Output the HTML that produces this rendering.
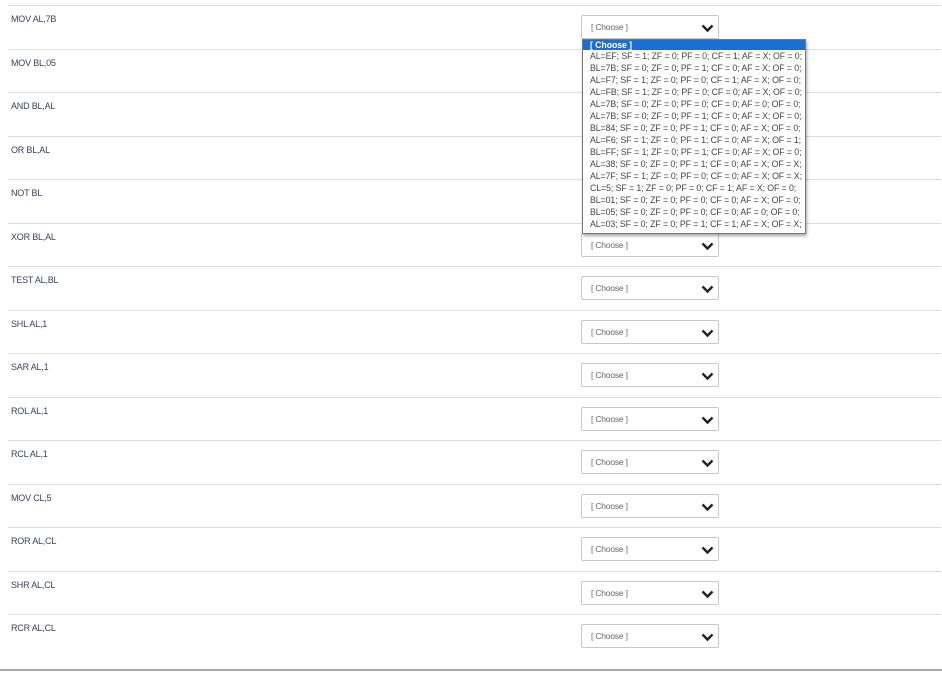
<!DOCTYPE html>
<html><head><style>
body{margin:0;width:942px;height:683px;background:#fff;position:relative;overflow:hidden;font-family:"Liberation Sans",sans-serif;}
.l{position:absolute;left:8px;width:933px;height:1px;background:#ddd;}
.t{position:absolute;left:11px;font-size:9px;color:#3a3f5a;letter-spacing:-0.2px;}
.s{position:absolute;left:581px;width:136px;height:22px;border:1px solid #c8c8c8;border-radius:2px;background:#fff;}
.s span{position:absolute;left:9px;top:6px;font-size:8.5px;color:#666;letter-spacing:-0.2px;}
.s svg{position:absolute;left:119px;top:8px;}
.dd{position:absolute;left:582px;top:39px;width:222px;height:193px;border:1px solid #777;background:#fff;box-shadow:1px 2px 3px rgba(0,0,0,.35);font-size:8.8px;color:#444;letter-spacing:-0.1px;}
.dd div{height:12px;line-height:12px;padding-left:7px;white-space:nowrap;overflow:hidden;}
.dd .h{background:#1a6fd6;color:#fff;height:10px;line-height:10px;font-weight:bold;}
.bot{position:absolute;left:0;top:669px;width:942px;height:2px;background:#aaa;}
</style></head><body>
<div id="rows"></div>
<div class="bot"></div>
<script>
var names=["MOV AL,7B","MOV BL,05","AND BL,AL","OR BL,AL","NOT BL","XOR BL,AL","TEST AL,BL","SHL AL,1","SAR AL,1","ROL AL,1","RCL AL,1","MOV CL,5","ROR AL,CL","SHR AL,CL","RCR AL,CL"];
var h="";
for(var i=0;i<15;i++){var y=Math.round(5+i*43.5);
h+='<div class="l" style="top:'+y+'px"></div>';
h+='<div class="t" style="top:'+(y+9)+'px">'+names[i]+'</div>';
if(i==0||i>=5)h+='<div class="s" style="top:'+(y+10)+'px"><span>[ Choose ]</span><svg width="13" height="9" viewBox="0 0 13 9"><path d="M1.5 1.5 L6.5 6.5 L11.5 1.5" stroke="#222" stroke-width="2.4" fill="none"/></svg></div>';}
document.getElementById("rows").innerHTML=h;
</script>
<div class="dd">
<div class="h">[ Choose ]</div>
<div>AL=EF; SF = 1; ZF = 0; PF = 0; CF = 1; AF = X; OF = 0;</div>
<div>BL=7B; SF = 0; ZF = 0; PF = 1; CF = 0; AF = X; OF = 0;</div>
<div>AL=F7; SF = 1; ZF = 0; PF = 0; CF = 1; AF = X; OF = 0;</div>
<div>AL=FB; SF = 1; ZF = 0; PF = 0; CF = 0; AF = X; OF = 0;</div>
<div>AL=7B; SF = 0; ZF = 0; PF = 0; CF = 0; AF = 0; OF = 0;</div>
<div>AL=7B; SF = 0; ZF = 0; PF = 1; CF = 0; AF = X; OF = 0;</div>
<div>BL=84; SF = 0; ZF = 0; PF = 1; CF = 0; AF = X; OF = 0;</div>
<div>AL=F6; SF = 1; ZF = 0; PF = 1; CF = 0; AF = X; OF = 1;</div>
<div>BL=FF; SF = 1; ZF = 0; PF = 1; CF = 0; AF = X; OF = 0;</div>
<div>AL=38; SF = 0; ZF = 0; PF = 1; CF = 0; AF = X; OF = X;</div>
<div>AL=7F; SF = 1; ZF = 0; PF = 0; CF = 0; AF = X; OF = X;</div>
<div>CL=5; SF = 1; ZF = 0; PF = 0; CF = 1; AF = X; OF = 0;</div>
<div>BL=01; SF = 0; ZF = 0; PF = 0; CF = 0; AF = X; OF = 0;</div>
<div>BL=05; SF = 0; ZF = 0; PF = 0; CF = 0; AF = 0; OF = 0;</div>
<div>AL=03; SF = 0; ZF = 0; PF = 1; CF = 1; AF = X; OF = X;</div>
</div>
</body></html>
